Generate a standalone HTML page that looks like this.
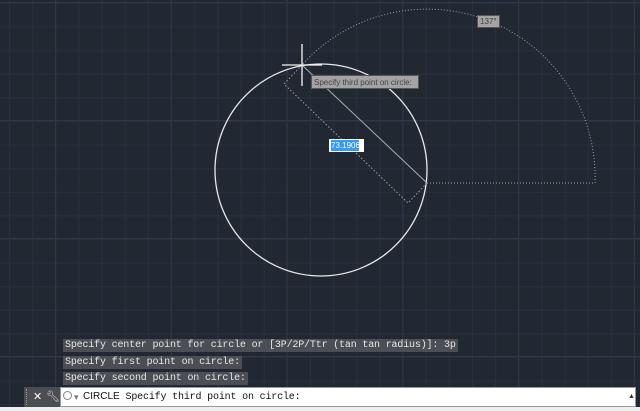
<!DOCTYPE html>
<html><head><meta charset="utf-8"><style>
body{margin:0;width:640px;height:411px;overflow:hidden;background:#212832;position:relative;font-family:"Liberation Sans",sans-serif}
.h{position:absolute;left:63px;height:13px;background:#4b4f55;color:#e6e6e6;font:10px "Liberation Mono",monospace;letter-spacing:-0.17px;line-height:13px;padding:0 2px;white-space:pre}
</style></head><body>
<svg width="640" height="411" style="position:absolute;left:0;top:0">
<defs>
<pattern id="mi" width="23.15" height="23.6" patternUnits="userSpaceOnUse" x="9" y="3">
<path d="M0.5 0V23.6M0 0.5H23.15" stroke="#273040" stroke-width="1" fill="none"/></pattern>
<pattern id="ma" width="115.75" height="118" patternUnits="userSpaceOnUse" x="55" y="2">
<path d="M0.5 0V118M0 0.5H115.75" stroke="#303846" stroke-width="1" fill="none"/></pattern>
</defs>
<rect width="640" height="411" fill="url(#mi)"/>
<rect width="640" height="411" fill="url(#ma)"/>
<circle cx="321" cy="170" r="106" stroke="#e8e8e8" stroke-width="1.3" fill="none"/>
<path d="M427 183 H595 A168 168 0 0 0 302 65" stroke="#9aa0a8" stroke-width="1" stroke-dasharray="1 2" fill="none"/>
<path d="M302 65 L284 84 L408 203 L427 183" stroke="#9aa0a8" stroke-width="1" stroke-dasharray="1.5 2" fill="none"/>
<path d="M302 65 L427 183" stroke="#a8acb2" stroke-width="1" fill="none"/>
<path d="M302 44V86M282 65H322" stroke="#f4f4f4" stroke-width="1.3"/>
</svg>
<div style="position:absolute;left:311px;top:75px;width:108px;height:14px;background:#a3a3a3;border:1px solid #555;color:#444;font-size:8px;line-height:14px;padding-left:2px;box-sizing:border-box">Specify third point on circle:</div>
<div style="position:absolute;left:477px;top:15px;width:23px;height:13px;background:#a3a3a3;border:1px solid #555;color:#444;font-size:8px;line-height:12px;box-sizing:border-box;padding-left:2px">137°</div>
<div style="position:absolute;left:329px;top:139px;width:35px;height:13px;background:#fff;box-sizing:border-box;padding:1px 2px"><span style="background:#3399ff;color:#fff;font-size:8px;line-height:11px;display:block;width:28px">73.1906</span></div>
<div class="h" style="top:339px">Specify center point for circle or [3P/2P/Ttr (tan tan radius)]: 3p</div>
<div class="h" style="top:356px">Specify first point on circle:</div>
<div class="h" style="top:372px">Specify second point on circle:</div>
<div style="position:absolute;left:24px;top:387px;width:36px;height:20px;background:#4a4d52"></div>
<div style="position:absolute;left:26px;top:389px;width:2px;height:16px;border-left:1px dotted #999"></div>
<div style="position:absolute;left:33px;top:389px;color:#fff;font-size:11px;line-height:16px">✕</div>
<div style="position:absolute;left:46px;top:389px;color:#ddd;font-size:11px;line-height:16px">🔧︎</div>
<div style="position:absolute;left:60px;top:387px;width:576px;height:20px;background:#fff;border:1px solid #999;box-sizing:border-box"></div>
<div style="position:absolute;left:63px;top:391px;width:9px;height:9px;border:1px solid #888;border-radius:50%;box-sizing:border-box"></div>
<div style="position:absolute;left:74px;top:389px;color:#777;font-size:9px;line-height:16px">▾</div>
<div style="position:absolute;left:83px;top:388px;font:10px 'Liberation Mono',monospace;letter-spacing:-0.17px;line-height:18px;color:#111;white-space:pre"><span style="font-family:'Liberation Sans';font-size:10px;letter-spacing:0">CIRCLE</span> Specify third point on circle:</div>
<div style="position:absolute;left:628px;top:393px;font-size:7px;color:#333">▲</div>
<div style="position:absolute;left:0;top:407px;width:640px;height:4px;background:#eeeeee"></div>
</body></html>
